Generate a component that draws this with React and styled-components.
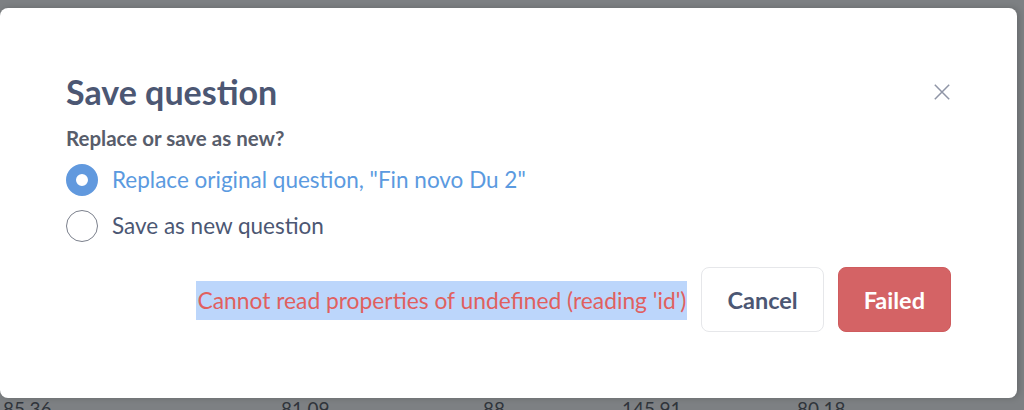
import React, { useState } from 'react';
import styled, { createGlobalStyle } from 'styled-components';

const GlobalStyle = createGlobalStyle`
  html, body { margin: 0; padding: 0; }
  body {
    width: 1024px; height: 410px; overflow: hidden;
    background: #7d8083;
    font-family: Lato, "Open Sans", sans-serif;
  }
`;

const Page = styled.div`
  width: 1024px; height: 410px; overflow: hidden;
  display: flex; flex-direction: column;
  padding-top: 8px; box-sizing: border-box;
`;

const Modal = styled.div`
  width: 1017px; height: 390px; flex: none;
  background: #fff; border-radius: 8px;
  box-shadow: 2px 0 6px rgba(0, 0, 0, 0.18);
  box-sizing: border-box;
  padding: 64px 66px 0 66px;
  display: flex; flex-direction: column;
`;

const Header = styled.div`
  display: flex; align-items: center; justify-content: space-between;
  height: 40px;
`;

const Title = styled.h2`
  margin: 0; font-size: 34px; line-height: 40px; font-weight: 700;
  color: #4c5773;
`;

const CloseBtn = styled.button`
  border: 0; background: none; padding: 0; margin-right: 1px;
  width: 16px; height: 16px; display: flex; cursor: pointer;
  svg { display: block; }
`;

const Label = styled.div`
  margin-top: 14px; font-size: 20.5px; line-height: 24px; font-weight: 700;
  color: #585d6b;
`;

const RadioList = styled.div`
  display: flex; flex-direction: column; gap: 14px; margin-top: 14px;
`;

const RadioRow = styled.label`
  display: flex; align-items: center; gap: 14px; cursor: pointer;
  font-size: 22.5px; line-height: 32px;
  color: ${p => (p.$checked ? '#5b9ae0' : '#4c5773')};
`;

const Dot = styled.span`
  width: 32px; height: 32px; border-radius: 50%; box-sizing: border-box; flex: none;
  border: ${p => (p.$checked ? '10px solid #6199de' : '1.5px solid #7b808c')};
  background: #fff;
`;

const Footer = styled.div`
  display: flex; align-items: center; justify-content: flex-end;
  margin-top: 25px; gap: 14px;
`;

const ErrorText = styled.span`
  display: inline-block; font-size: 22.8px; line-height: 39px; margin-top: 2px;
  color: #e0605f; background: #bcd6fb; padding: 0 1px;
`;

const Button = styled.button`
  height: 65px; padding: 0 25px;
  border-radius: 8px; font-family: inherit; font-size: 23.5px; font-weight: 700;
  cursor: pointer;
  border: 1px solid ${p => (p.$danger ? '#cf5c5e' : '#e6e7ea')};
  background: ${p => (p.$danger ? '#d46365' : '#fff')};
  color: ${p => (p.$danger ? '#fff' : '#4c5773')};
`;

const Behind = styled.div`
  display: grid; grid-template-columns: 278px 202px 139px 175px 1fr;
  padding-left: 3px; font-size: 19px; line-height: 24px; color: #30353b;
  margin-top: -1px;
`;

const options = [
  { id: 'replace', label: 'Replace original question, "Fin novo Du 2"' },
  { id: 'new', label: 'Save as new question' },
];

export default function App() {
  const [choice, setChoice] = useState('replace');

  return (
    <Page>
      <GlobalStyle />
      <Modal>
        <Header>
          <Title>Save question</Title>
          <CloseBtn aria-label="Close">
            <svg width="16" height="16" viewBox="0 0 16 16">
              <path d="M0.8 0.8 L15.2 15.2 M15.2 0.8 L0.8 15.2" stroke="#8f95a6" strokeWidth="1.5" fill="none" />
            </svg>
          </CloseBtn>
        </Header>
        <Label>Replace or save as new?</Label>
        <RadioList>
          {options.map(o => (
            <RadioRow key={o.id} $checked={choice === o.id} onClick={() => setChoice(o.id)}>
              <Dot $checked={choice === o.id} />
              {o.label}
            </RadioRow>
          ))}
        </RadioList>
        <Footer>
          <ErrorText>Cannot read properties of undefined (reading 'id')</ErrorText>
          <Button>Cancel</Button>
          <Button $danger>Failed</Button>
        </Footer>
      </Modal>
      <Behind>
        <span>85.36</span>
        <span>81.09</span>
        <span>88</span>
        <span>145.91</span>
        <span>80.18</span>
      </Behind>
    </Page>
  );
}
